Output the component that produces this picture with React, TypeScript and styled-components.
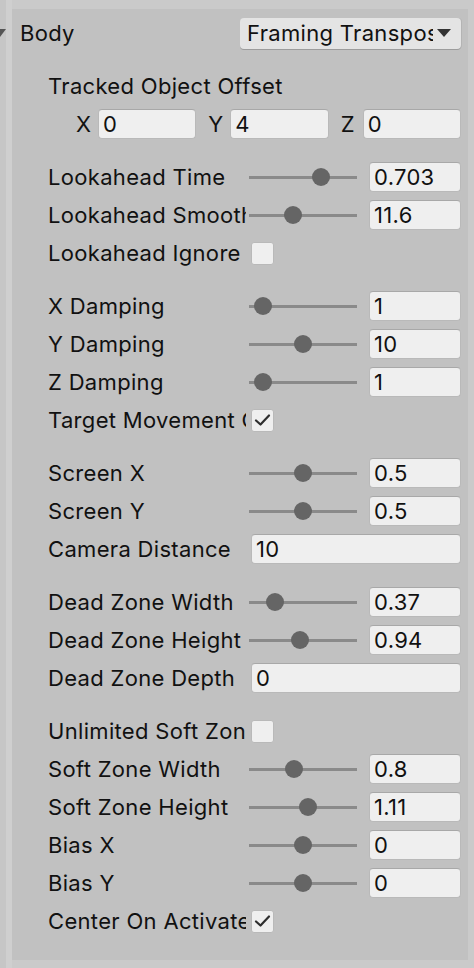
import React from "react";
import styled, { createGlobalStyle } from "styled-components";

const GlobalStyle = createGlobalStyle`
  html, body {
    margin: 0;
    padding: 0;
    background: #cacaca;
    overflow: hidden;
  }
  * { box-sizing: border-box; }
  body {
    font-family: Inter, "Noto Sans", "Liberation Sans", sans-serif;
    font-size: 22px;
    letter-spacing: 0.32px;
    color: #111111;
  }
`;

const Page = styled.div`
  width: 474px;
  min-height: 968px;
  padding: 9px 6px 8px 12px;
  overflow: hidden;
  background: linear-gradient(to right, #c6c6c6 0, #c6c6c6 6px, #cfcfcf 6px, #cfcfcf 12px, #cacaca 12px);
`;

const Panel = styled.div`
  background: #c1c1c1;
  padding: 7px 7px 22px 0;
  display: flex;
  flex-direction: column;
`;

const HeaderRow = styled.div`
  position: relative;
  height: 34px;
  display: flex;
  align-items: center;
  justify-content: space-between;
  padding-left: 8px;
`;

const FoldArrow = styled.div`
  position: absolute;
  left: -18px;
  top: 13px;
  width: 0;
  height: 0;
  border-left: 6px solid transparent;
  border-right: 6px solid transparent;
  border-top: 8px solid #555555;
`;

const HeaderLabel = styled.span`
  line-height: 1;
`;

const Dropdown = styled.div`
  width: 221px;
  height: 31px;
  background: #e4e4e4;
  border-radius: 4px;
  box-shadow: 0 1px 0 #9c9c9c, 1px 0 0 #b4b4b4;
  display: flex;
  align-items: center;
  padding: 0 10px 0 7px;
  gap: 4px;
`;

const DropdownText = styled.span`
  flex: 1;
  overflow: hidden;
  white-space: nowrap;
`;

const DropArrow = styled.span`
  width: 0;
  height: 0;
  border-left: 7px solid transparent;
  border-right: 7px solid transparent;
  border-top: 8px solid #333333;
  flex-shrink: 0;
`;

const Group = styled.div`
  display: flex;
  flex-direction: column;
  gap: 4px;
  margin-top: 19px;
  padding-left: 36px;
`;

const Row = styled.div`
  height: 34px;
  display: flex;
  align-items: center;
`;

const Label = styled.div<{ $auto?: boolean }>`
  width: ${(p) => (p.$auto ? "auto" : "198px")};
  flex-shrink: 0;
  overflow: hidden;
  white-space: nowrap;
  margin-right: 3px;
`;

const Field = styled.div<{ $gap?: number }>`
  flex: 1;
  height: 30px;
  margin-left: ${(p) => p.$gap ?? 0}px;
  background: #efefef;
  border-radius: 4px;
  border: 1px solid #b9b9b9;
  border-top-color: #a8a8a8;
  display: flex;
  align-items: center;
  padding-left: 4px;
  white-space: nowrap;
  overflow: hidden;
`;

const SliderTrack = styled.div`
  position: relative;
  width: 108px;
  height: 3px;
  background: #8a8a8a;
  flex-shrink: 0;
`;

const Thumb = styled.div`
  position: absolute;
  top: 50%;
  width: 18px;
  height: 18px;
  margin-left: -9px;
  margin-top: -9px;
  border-radius: 50%;
  background: #656565;
`;

const CheckBox = styled.div`
  width: 23px;
  height: 23px;
  margin-left: 2px;
  background: #efefef;
  border-radius: 3px;
  border: 1px solid #b9b9b9;
  display: flex;
  align-items: center;
  justify-content: center;
`;

const VectorRow = styled.div`
  height: 34px;
  display: flex;
  align-items: center;
  gap: 12px;
  padding-left: 28px;
`;

const VectorPart = styled.div`
  flex: 1;
  display: flex;
  align-items: center;
`;

const AxisLabel = styled.span`
  width: 22px;
  flex-shrink: 0;
`;

type Item =
  | { kind: "slider"; label: string; value: string; frac: number }
  | { kind: "check"; label: string; checked: boolean }
  | { kind: "field"; label: string; value: string };

const groups: Item[][] = [
  [
    { kind: "slider", label: "Lookahead Time", value: "0.703", frac: 0.703 },
    { kind: "slider", label: "Lookahead Smoothing", value: "11.6", frac: 0.387 },
    { kind: "check", label: "Lookahead Ignore Y", checked: false },
  ],
  [
    { kind: "slider", label: "X Damping", value: "1", frac: 0.05 },
    { kind: "slider", label: "Y Damping", value: "10", frac: 0.5 },
    { kind: "slider", label: "Z Damping", value: "1", frac: 0.05 },
    { kind: "check", label: "Target Movement Only", checked: true },
  ],
  [
    { kind: "slider", label: "Screen X", value: "0.5", frac: 0.5 },
    { kind: "slider", label: "Screen Y", value: "0.5", frac: 0.5 },
    { kind: "field", label: "Camera Distance", value: "10" },
  ],
  [
    { kind: "slider", label: "Dead Zone Width", value: "0.37", frac: 0.185 },
    { kind: "slider", label: "Dead Zone Height", value: "0.94", frac: 0.47 },
    { kind: "field", label: "Dead Zone Depth", value: "0" },
  ],
  [
    { kind: "check", label: "Unlimited Soft Zone", checked: false },
    { kind: "slider", label: "Soft Zone Width", value: "0.8", frac: 0.4 },
    { kind: "slider", label: "Soft Zone Height", value: "1.11", frac: 0.555 },
    { kind: "slider", label: "Bias X", value: "0", frac: 0.5 },
    { kind: "slider", label: "Bias Y", value: "0", frac: 0.5 },
    { kind: "check", label: "Center On Activate", checked: true },
  ],
];

const Check = () => (
  <svg width="17" height="14" viewBox="0 0 17 14">
    <path d="M2 7.5 L6.5 11.5 L15 2.5" fill="none" stroke="#2e2e2e" strokeWidth="2.2" strokeLinecap="round" strokeLinejoin="round" />
  </svg>
);

const renderItem = (it: Item, i: number) => {
  if (it.kind === "slider") {
    return (
      <Row key={i}>
        <Label>{it.label}</Label>
        <SliderTrack>
          <Thumb style={{ left: `${9 + it.frac * 90}px` }} />
        </SliderTrack>
        <Field $gap={12}>{it.value}</Field>
      </Row>
    );
  }
  if (it.kind === "check") {
    return (
      <Row key={i}>
        <Label>{it.label}</Label>
        <CheckBox>{it.checked ? <Check /> : null}</CheckBox>
      </Row>
    );
  }
  return (
    <Row key={i}>
      <Label>{it.label}</Label>
      <Field $gap={2}>{it.value}</Field>
    </Row>
  );
};

export default function App() {
  return (
    <>
      <GlobalStyle />
      <Page>
        <Panel>
          <HeaderRow>
            <FoldArrow />
            <HeaderLabel>Body</HeaderLabel>
            <Dropdown>
              <DropdownText>Framing Transposer</DropdownText>
              <DropArrow />
            </Dropdown>
          </HeaderRow>
          <Group>
            <Row>
              <Label $auto>Tracked Object Offset</Label>
            </Row>
            <VectorRow>
              <VectorPart>
                <AxisLabel>X</AxisLabel>
                <Field>0</Field>
              </VectorPart>
              <VectorPart>
                <AxisLabel>Y</AxisLabel>
                <Field>4</Field>
              </VectorPart>
              <VectorPart>
                <AxisLabel>Z</AxisLabel>
                <Field>0</Field>
              </VectorPart>
            </VectorRow>
          </Group>
          {groups.map((g, gi) => (
            <Group key={gi}>{g.map(renderItem)}</Group>
          ))}
        </Panel>
      </Page>
    </>
  );
}
